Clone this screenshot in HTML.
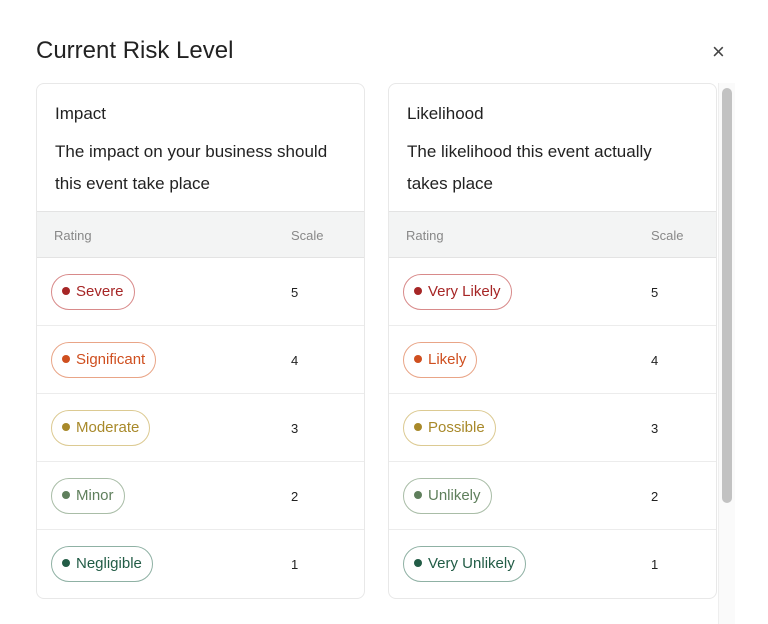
<!DOCTYPE html><html><head><style>
*{box-sizing:border-box;margin:0;padding:0}
body{width:768px;height:624px;background:#fff;font-family:"Liberation Sans",sans-serif;position:relative;overflow:hidden;color:#222}
.title{position:absolute;left:36px;top:37px;font-size:24px;color:#222}
.x{position:absolute;left:712px;top:39px;font-size:22px;color:#444;font-weight:300}
.card{position:absolute;top:83px;width:329px;height:516px;border:1px solid #e8e8e8;border-radius:8px;overflow:hidden;background:#fff}
.h{position:absolute;left:18px;top:20px;font-size:17px;color:#222}
.d{position:absolute;left:18px;top:52px;font-size:17px;line-height:32px;color:#222;width:290px}
.th{position:absolute;left:0;right:0;top:127px;height:47px;background:#f3f4f4;border-top:1px solid #e3e3e3;border-bottom:1px solid #e3e3e3;font-size:13px;color:#888}
.th span{position:absolute;top:16px}
.row{position:absolute;left:0;right:0;height:68px;border-bottom:1px solid #ececec}
.pill{position:absolute;left:14px;top:16px;height:36px;border:1px solid;border-radius:18px;padding:0 10px 0 10px;font-size:15px;line-height:34px;white-space:nowrap}
.pill i{display:inline-block;width:8px;height:8px;border-radius:50%;margin-right:6px;vertical-align:1px}
.n{position:absolute;top:27px;font-size:13px;color:#222}
.track{position:absolute;left:718px;top:83px;width:17px;height:541px;background:#fafafa;border-left:1px solid #eee}
.thumb{position:absolute;left:722px;top:88px;width:10px;height:415px;background:#c2c2c2;border-radius:5px}
</style></head><body>
<div class="title">Current Risk Level</div>
<div class="x">×</div>
<div class="track"></div><div class="thumb"></div>

<div class="card" style="left:36px">
<div class="h">Impact</div>
<div class="d">The impact on your business should this event take place</div>
<div class="th"><span style="left:17px">Rating</span><span style="left:254px">Scale</span></div>
<div class="row" style="top:174px"><div class="pill" style="color:#a62626;border-color:#d88a8a"><i style="background:#a62626"></i>Severe</div><div class="n" style="left:254px">5</div></div>
<div class="row" style="top:242px"><div class="pill" style="color:#cf4f1f;border-color:#e9a587"><i style="background:#cf4f1f"></i>Significant</div><div class="n" style="left:254px">4</div></div>
<div class="row" style="top:310px"><div class="pill" style="color:#a8892a;border-color:#dcca92"><i style="background:#a8892a"></i>Moderate</div><div class="n" style="left:254px">3</div></div>
<div class="row" style="top:378px"><div class="pill" style="color:#5f7f5c;border-color:#a9bda7"><i style="background:#5f7f5c"></i>Minor</div><div class="n" style="left:254px">2</div></div>
<div class="row" style="top:446px;border-bottom:none"><div class="pill" style="color:#225c46;border-color:#8fb1a4"><i style="background:#225c46"></i>Negligible</div><div class="n" style="left:254px">1</div></div>
</div>

<div class="card" style="left:388px">
<div class="h">Likelihood</div>
<div class="d" style="width:275px">The likelihood this event actually takes place</div>
<div class="th"><span style="left:17px">Rating</span><span style="left:262px">Scale</span></div>
<div class="row" style="top:174px"><div class="pill" style="color:#a62626;border-color:#d88a8a"><i style="background:#a62626"></i>Very Likely</div><div class="n" style="left:262px">5</div></div>
<div class="row" style="top:242px"><div class="pill" style="color:#cf4f1f;border-color:#e9a587"><i style="background:#cf4f1f"></i>Likely</div><div class="n" style="left:262px">4</div></div>
<div class="row" style="top:310px"><div class="pill" style="color:#a8892a;border-color:#dcca92"><i style="background:#a8892a"></i>Possible</div><div class="n" style="left:262px">3</div></div>
<div class="row" style="top:378px"><div class="pill" style="color:#5f7f5c;border-color:#a9bda7"><i style="background:#5f7f5c"></i>Unlikely</div><div class="n" style="left:262px">2</div></div>
<div class="row" style="top:446px;border-bottom:none"><div class="pill" style="color:#225c46;border-color:#8fb1a4"><i style="background:#225c46"></i>Very Unlikely</div><div class="n" style="left:262px">1</div></div>
</div>
</body></html>
